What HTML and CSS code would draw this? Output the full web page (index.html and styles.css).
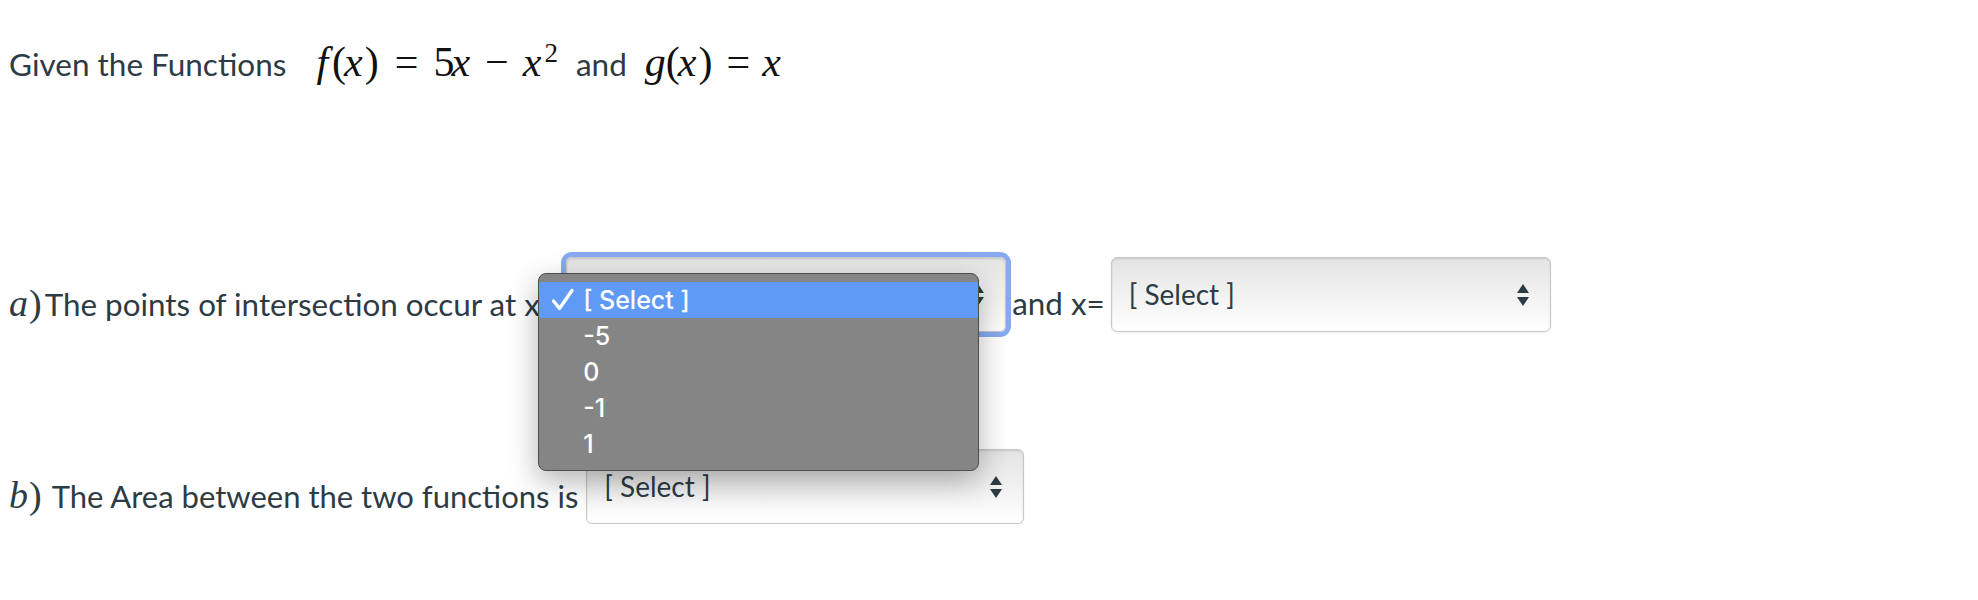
FILE: index.html
```html
<!DOCTYPE html>
<html lang="en">
<head>
    <meta charset="UTF-8">
    <title>Area between functions</title>
    <link rel="stylesheet" href="styles.css">
</head>
<body>
    <div class="question">
        <p class="given">
            <span class="lead">Given the Functions</span>
            <span class="math">
                <i class="fn">f</i><span class="po">(</span><i>x</i><span class="pc">)</span>
                <span class="rel">=</span><span class="coef">5</span><i>x</i>
                <span class="bin">&minus;</span><i>x</i><sup>2</sup>
            </span>
            <span class="and">and</span>
            <span class="math">
                <i class="fn fn-g">g</i><span class="po">(</span><i>x</i><span class="pc">)</span>
                <span class="rel rel-g">=</span><i>x</i>
            </span>
        </p>

        <div class="part part-a">
            <span class="label"><i class="var">a</i><span class="pc">)</span>The points of intersection occur at x=</span>
            <div class="select-wrap">
                <div class="select focused">
                    <span class="arrows"></span>
                </div>
                <!-- open dropdown list -->
                <ul class="menu">
                    <li class="active">
                        <svg class="check" width="26" height="26" viewBox="0 0 26 26">
                            <path d="M3.5 14 L9.5 21.5 L22 3.5" fill="none" stroke="#fff" stroke-width="3.4" stroke-linecap="round" stroke-linejoin="round"/>
                        </svg>[ Select ]
                    </li>
                    <li>-5</li>
                    <li>0</li>
                    <li>-1</li>
                    <li>1</li>
                </ul>
            </div>
            <span class="label">and x=</span>
            <div class="select select-x2">
                <span class="value">[ Select ]</span>
                <span class="arrows"></span>
            </div>
        </div>

        <div class="part part-b">
            <span class="label"><i class="var">b</i><span class="pc">)</span> The Area between the two functions is</span>
            <div class="select">
                <span class="value">[ Select ]</span>
                <span class="arrows"></span>
            </div>
        </div>
    </div>
</body>
</html>
```

FILE: styles.css
```css
body {
    margin: 0;
    font-family: Lato, "Open Sans", sans-serif;
    font-size: 31.5px;
    color: #2d3b45;
    background-color: #fff;
}
.question {
    padding: 40px 9px 0;
}
.given {
    margin: 0;
    display: flex;
    align-items: baseline;
    line-height: 44px;
}
.lead {
    margin-right: 30px;
}

/* typeset maths */
.math {
    display: inline-flex;
    align-items: baseline;
    font-family: "Liberation Serif", "Times New Roman", serif;
    font-size: 42px;
    color: #111;
    white-space: nowrap;
}
.math .fn {
    margin-right: 4px;
}
.math .fn-g {
    margin-right: 0;
}
.po {
    margin-right: -2px;
}
.pc {
    margin-left: 2px;
}
.rel {
    margin: 0 15px 0 16px;
}
.rel-g {
    margin: 0 12px 0 14px;
}
.coef {
    margin-right: -3px;
}
.bin {
    margin: 0 14px 0 15px;
}
.math sup {
    font-size: 27px;
    line-height: 0;
    margin: 13px 0 0 3px;
    align-self: flex-start;
}
.and {
    margin: 0 18px 0 18px;
}
.var {
    font-family: "Liberation Serif", serif;
    font-size: 38px;
}

/* answer rows */
.part {
    display: flex;
    align-items: center;
}
.part-a {
    margin-top: 171px;
    font-size: 31.4px;
}
.part-b {
    margin-top: 117px;
    font-size: 31px;
}
.label {
    margin-top: 16px;
    white-space: nowrap;
}
.label .pc {
    font-family: "Liberation Serif", serif;
    font-size: 38px;
    margin: 0 3px 0 1px;
}

/* select boxes */
.select-wrap {
    position: relative;
    margin: 0 6px 0 8px;
}
.select {
    position: relative;
    box-sizing: border-box;
    width: 440px;
    height: 75px;
    margin-left: 6px;
    padding-left: 17px;
    display: flex;
    align-items: center;
    border: 1px solid #c8c8c8;
    border-radius: 6px;
    background: linear-gradient(#e4e4e4, #f4f4f4 60%, #fff);
    box-shadow: inset 0 1px 2px rgba(0, 0, 0, 0.12), 0 1px 3px rgba(0, 0, 0, 0.06);
    font-size: 28px;
}
.part-b .select {
    margin-left: 8px;
    width: 438px;
}
.select-wrap .select {
    margin-left: 0;
}
.select.focused {
    box-shadow: 0 0 0 5px #87aaf0, inset 0 1px 2px rgba(0, 0, 0, 0.12);
}
.value {
    margin-top: -2px;
}
.arrows {
    position: absolute;
    right: 21px;
    top: 50%;
    width: 12px;
    height: 26px;
    margin-top: -13px;
}
.arrows::before,
.arrows::after {
    content: "";
    position: absolute;
    left: 0;
    border-left: 6px solid transparent;
    border-right: 6px solid transparent;
}
.arrows::before {
    top: 2px;
    border-bottom: 9px solid #2d3b45;
}
.arrows::after {
    bottom: 2px;
    border-top: 9px solid #2d3b45;
}

/* open native-looking list */
.menu {
    position: absolute;
    z-index: 10;
    left: -28px;
    top: 16px;
    width: 441px;
    box-sizing: border-box;
    margin: 0;
    padding: 8px 0;
    list-style: none;
    background-color: #858585;
    border: 1px solid #4e4e4e;
    border-radius: 8px;
    box-shadow: 0 10px 30px rgba(0, 0, 0, 0.3);
    font-family: Inter, "Liberation Sans", Arial, sans-serif;
    font-size: 25px;
    font-weight: 500;
    color: #fff;
}
.menu li {
    position: relative;
    height: 36px;
    line-height: 36px;
    padding-left: 44px;
}
.menu li.active {
    background-color: #5e9af6;
}
.check {
    position: absolute;
    left: 11px;
    top: 5px;
}
```
